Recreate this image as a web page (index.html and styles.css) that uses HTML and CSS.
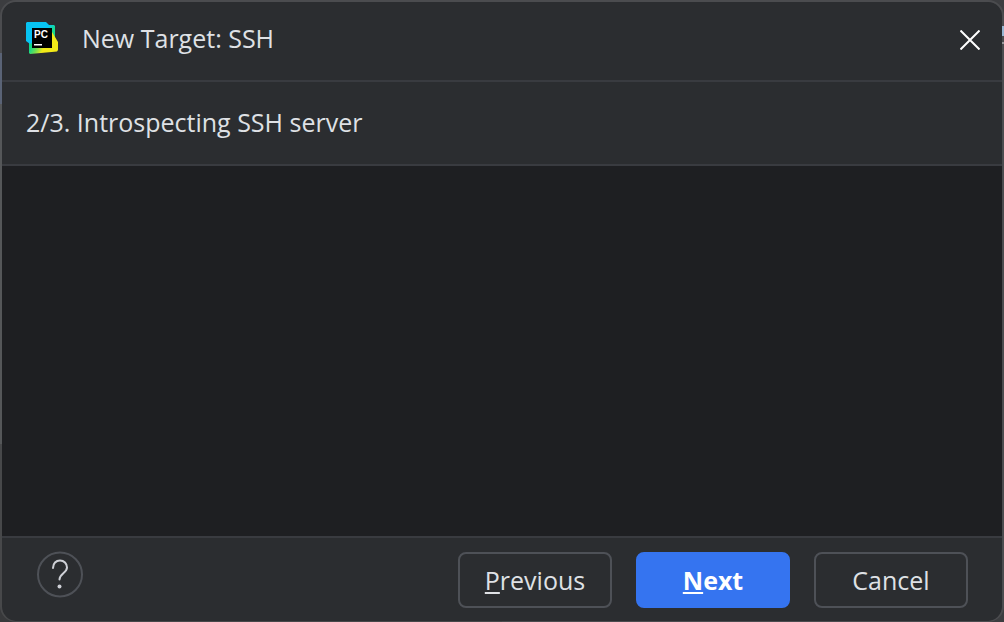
FILE: index.html
```html
<!DOCTYPE html>
<html lang="en">
<head>
<meta charset="utf-8">
<title>New Target: SSH</title>
<link rel="stylesheet" href="styles.css">
</head>
<body>
<main class="dialog" role="dialog" aria-labelledby="dialog-title">
  <header class="titlebar">
    <svg class="logo" viewBox="0 0 32 32" aria-hidden="true">
      <defs>
        <linearGradient id="green-yellow" gradientUnits="userSpaceOnUse" x1="5" y1="18" x2="22" y2="26">
          <stop offset="0.15" stop-color="#10d789"/>
          <stop offset="0.5" stop-color="#7be04c"/>
          <stop offset="0.8" stop-color="#f3ea18"/>
        </linearGradient>
        <linearGradient id="blue-green" gradientUnits="userSpaceOnUse" x1="13" y1="4" x2="26" y2="16">
          <stop offset="0.35" stop-color="#08c8ee"/>
          <stop offset="0.75" stop-color="#17da8c"/>
        </linearGradient>
      </defs>
      <path fill="url(#blue-green)" d="M20 3H28L29 4 29 18 10 24 4 22z"/>
      <path fill="url(#green-yellow)" d="M26 10 32 20 32 28 31 29.5 4 32 3 31V20L10 16z"/>
      <path fill="#07c3f2" d="M1 0H20L24 4 8 20 4 22 0 19V1z"/>
      <path fill="#000" d="M6 6H26V26H6z"/>
      <text class="logo-text" x="8" y="16">PC</text>
      <path fill="#fff" d="M8 22H16V23.5H8z"/>
    </svg>
    <h1 class="title" id="dialog-title">New Target: SSH</h1>
    <button class="close" type="button" aria-label="Close">
      <svg class="close-icon" viewBox="0 0 20 20" aria-hidden="true"><path d="M.5.5 19.5 19.5M19.5.5.5 19.5"/></svg>
    </button>
  </header>
  <h2 class="step">2/3. Introspecting SSH server</h2>
  <section class="output" aria-label="Introspection output"></section>
  <footer class="footer">
    <button class="help" type="button" aria-label="Help">
      <svg class="help-icon" viewBox="0 0 46 46" aria-hidden="true">
        <circle class="help-ring" cx="23" cy="22.5" r="22"/>
        <path class="help-mark" d="M16 16C16 11.5 19 8.500 23 8.500S30 11.500 30 15.500C30 21 22.500 21.500 22.500 27.500"/>
        <circle class="help-dot" cx="22.5" cy="34.500" r="2"/>
      </svg>
    </button>
    <div class="actions">
      <button class="button" type="button"><u class="mnemonic">P</u>revious</button>
      <button class="button button-primary" type="button"><u class="mnemonic">N</u>ext</button>
      <button class="button" type="button">Cancel</button>
    </div>
  </footer>
</main>
</body>
</html>
```
FILE: styles.css
```css
* {
  box-sizing: border-box;
}

body {
  margin: 0;
  color: #dfe1e5;
  font-family: "Open Sans", "Noto Sans", sans-serif;
  font-size: 25px;
  line-height: 32px;
  background: linear-gradient(#3c3d40 53px, #4c566b 53px 104px, #47494b 104px 444px, #38393b 444px) left / 50% 100% no-repeat,
    linear-gradient(#3c3d40 26px, #8fb0d0 26px 36px, #3c3d40 36px 42px, #8c8e91 42px 44px, #3c3d40 44px) right / 50% 100% no-repeat;
}

.dialog {
  display: flex;
  flex-direction: column;
  min-height: 100vh;
  border: 2px solid #ffffff14;
  border-bottom-width: 1px;
  border-radius: 16px;
  background: #2b2d30 padding-box;
  overflow: hidden;
}

.titlebar {
  display: flex;
  align-items: center;
  height: 80px;
  padding: 0 22px 6px 24px;
  border-bottom: 2px solid #393b40;
}

.logo {
  width: 32px;
  height: 32px;
}

.logo-text {
  fill: #fff;
  font-family: "Liberation Sans", Arial, sans-serif;
  font-size: 10px;
  font-weight: 700;
}

.title,
.step {
  margin: 0;
  font-size: 25px;
  font-weight: 400;
}

.title {
  flex: 1;
  padding-left: 24px;
}

.close {
  display: flex;
  margin-top: 4px;
  padding: 0;
  border: 0;
  background: none;
}

.close-icon {
  width: 20px;
  height: 20px;
  fill: none;
  stroke: #fff;
  stroke-width: 2;
}

.step {
  padding: 24px 24px 26px;
  border-bottom: 2px solid #393b40;
}

.output {
  flex: 1;
  background: #1e1f22;
}

.footer {
  display: flex;
  align-items: flex-start;
  justify-content: space-between;
  padding: 14px 34px 13px 35px;
  border-top: 2px solid #393b40;
}

.help {
  display: flex;
  padding: 0;
  border: 0;
  background: none;
}

.help-icon {
  width: 46px;
  height: 46px;
  fill: none;
  overflow: visible;
}

.help-ring {
  stroke: #4e5157;
  stroke-width: 2;
}

.help-mark {
  stroke: #ced0d6;
  stroke-width: 2;
  stroke-linecap: round;
}

.help-dot {
  fill: #ced0d6;
}

.actions {
  display: flex;
  gap: 24px;
}

.button {
  width: 154px;
  height: 56px;
  padding: 0;
  border: 2px solid #4e5157;
  border-radius: 8px;
  background: none;
  color: inherit;
  font: inherit;
}

.button-primary {
  border-color: #3574f0;
  background: #3574f0;
  color: #fff;
  font-weight: 700;
}

.mnemonic {
  text-decoration-thickness: 2px;
  text-underline-offset: 2px;
}
```
